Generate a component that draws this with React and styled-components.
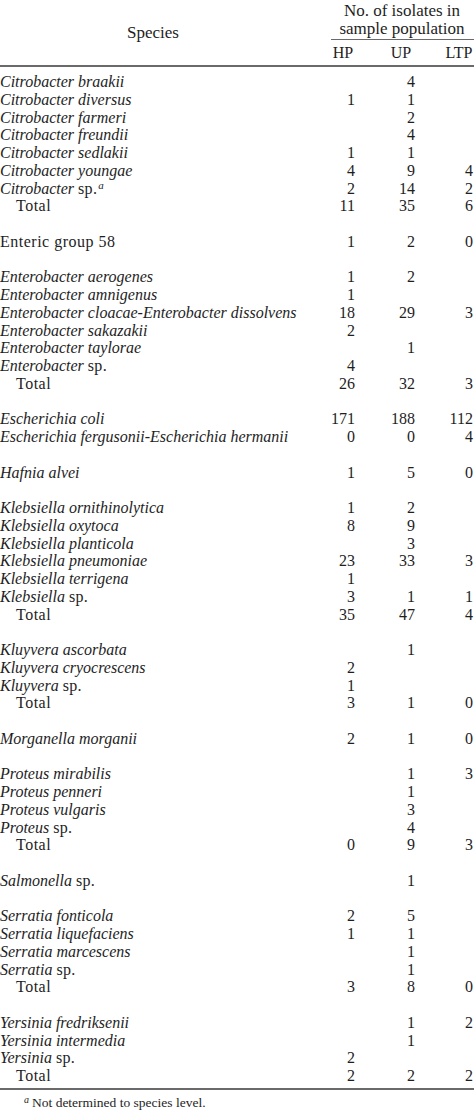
import React from "react";
import styled, { createGlobalStyle } from "styled-components";

const GlobalStyle = createGlobalStyle`
  html, body {
    margin: 0;
    padding: 0;
    background: #ffffff;
    overflow: hidden;
  }
  body {
    font-family: "Liberation Serif", "Times New Roman", serif;
    color: #1e1e1e;
  }
`;

const ROW_H = 17.75;

const Table = styled.div`
  width: 474px;
  font-size: 16px;
`;

const Header = styled.div`
  display: grid;
  grid-template-columns: 312px 1fr;
  grid-template-rows: auto 25px;
  font-size: 17px;
`;

const SpeciesHead = styled.div`
  grid-row: 1 / span 2;
  display: flex;
  align-items: center;
  justify-content: center;
  padding: 1px 6px 0 0;
`;

const GroupHead = styled.div`
  margin-left: 19px;
  padding: 2px 15px 1.5px 0;
  border-bottom: 1px solid #6a6a6a;
  text-align: center;
  line-height: ${ROW_H}px;
`;

const SubHeads = styled.div`
  display: grid;
  grid-template-columns: repeat(3, 58px);
  padding-left: 2px;
  align-items: center;
  font-size: 16px;
`;

const SubHead = styled.div`
  text-align: center;
  padding-top: 1px;
`;

const Rule = styled.div`
  height: 2px;
  background: #6a6a6a;
`;

const Body = styled.div`
  padding-top: 6px;
`;

const Row = styled.div`
  display: grid;
  grid-template-columns: 312px 43px 60px 58px;
  height: ${ROW_H}px;
  line-height: ${ROW_H}px;
`;

const Name = styled.div`
  padding-left: ${(p) => (p.$indent ? "16px" : "0")};
  font-style: ${(p) => (p.$italic ? "italic" : "normal")};
  letter-spacing: ${(p) => (p.$italic ? "0" : "0.5px")};
  white-space: nowrap;
`;

const Roman = styled.span`
  font-style: normal;
  letter-spacing: 0.3px;
`;

const Num = styled.div`
  text-align: right;
  white-space: nowrap;
`;

const Sup = styled.sup`
  font-style: italic;
  font-size: 11px;
  line-height: 0;
  vertical-align: 5px;
  margin-left: 1px;
`;

const BottomRule = styled.div`
  height: 2px;
  background: #6a6a6a;
  margin-top: 3px;
`;

const Footnote = styled.div`
  padding: 2px 0 0 24px;
  font-size: 13.5px;
  line-height: 16px;
`;

const FootSup = styled.span`
  font-style: italic;
  font-size: 10px;
  vertical-align: 4px;
  margin-right: 3px;
`;

const groups = [
  {
    rows: [
      ["Citrobacter braakii", "", "4", ""],
      ["Citrobacter diversus", "1", "1", ""],
      ["Citrobacter farmeri", "", "2", ""],
      ["Citrobacter freundii", "", "4", ""],
      ["Citrobacter sedlakii", "1", "1", ""],
      ["Citrobacter youngae", "4", "9", "4"],
      [{ genus: "Citrobacter", sp: true, sup: "a" }, "2", "14", "2"],
    ],
    total: ["11", "35", "6"],
  },
  { rows: [[{ plain: "Enteric group 58" }, "1", "2", "0"]] },
  {
    rows: [
      ["Enterobacter aerogenes", "1", "2", ""],
      ["Enterobacter amnigenus", "1", "", ""],
      ["Enterobacter cloacae-Enterobacter dissolvens", "18", "29", "3"],
      ["Enterobacter sakazakii", "2", "", ""],
      ["Enterobacter taylorae", "", "1", ""],
      [{ genus: "Enterobacter", sp: true }, "4", "", ""],
    ],
    total: ["26", "32", "3"],
  },
  {
    rows: [
      ["Escherichia coli", "171", "188", "112"],
      ["Escherichia fergusonii-Escherichia hermanii", "0", "0", "4"],
    ],
  },
  { rows: [["Hafnia alvei", "1", "5", "0"]] },
  {
    rows: [
      ["Klebsiella ornithinolytica", "1", "2", ""],
      ["Klebsiella oxytoca", "8", "9", ""],
      ["Klebsiella planticola", "", "3", ""],
      ["Klebsiella pneumoniae", "23", "33", "3"],
      ["Klebsiella terrigena", "1", "", ""],
      [{ genus: "Klebsiella", sp: true }, "3", "1", "1"],
    ],
    total: ["35", "47", "4"],
  },
  {
    rows: [
      ["Kluyvera ascorbata", "", "1", ""],
      ["Kluyvera cryocrescens", "2", "", ""],
      [{ genus: "Kluyvera", sp: true }, "1", "", ""],
    ],
    total: ["3", "1", "0"],
  },
  { rows: [["Morganella morganii", "2", "1", "0"]] },
  {
    rows: [
      ["Proteus mirabilis", "", "1", "3"],
      ["Proteus penneri", "", "1", ""],
      ["Proteus vulgaris", "", "3", ""],
      [{ genus: "Proteus", sp: true }, "", "4", ""],
    ],
    total: ["0", "9", "3"],
  },
  { rows: [[{ genus: "Salmonella", sp: true }, "", "1", ""]] },
  {
    rows: [
      ["Serratia fonticola", "2", "5", ""],
      ["Serratia liquefaciens", "1", "1", ""],
      ["Serratia marcescens", "", "1", ""],
      [{ genus: "Serratia", sp: true }, "", "1", ""],
    ],
    total: ["3", "8", "0"],
  },
  {
    rows: [
      ["Yersinia fredriksenii", "", "1", "2"],
      ["Yersinia intermedia", "", "1", ""],
      [{ genus: "Yersinia", sp: true }, "2", "", ""],
    ],
    total: ["2", "2", "2"],
  },
];

function NameCell({ label }) {
  if (typeof label === "string") {
    return <Name $italic>{label}</Name>;
  }
  if (label.plain) {
    return <Name>{label.plain}</Name>;
  }
  return (
    <Name $italic>
      {label.genus} <Roman>sp.</Roman>
      {label.sup && <Sup>{label.sup}</Sup>}
    </Name>
  );
}

function DataRow({ label, values }) {
  return (
    <Row>
      <NameCell label={label} />
      {values.map((v, i) => (
        <Num key={i}>{v}</Num>
      ))}
    </Row>
  );
}

export default function App() {
  return (
    <>
      <GlobalStyle />
      <Table>
        <Header>
          <SpeciesHead>Species</SpeciesHead>
          <GroupHead>
            No. of isolates in
            <br />
            sample population
          </GroupHead>
          <SubHeads>
            <SubHead>HP</SubHead>
            <SubHead>UP</SubHead>
            <SubHead>LTP</SubHead>
          </SubHeads>
        </Header>
        <Rule />
        <Body>
          {groups.map((g, gi) => (
            <React.Fragment key={gi}>
              {gi > 0 && <Row />}
              {g.rows.map(([label, ...values], ri) => (
                <DataRow key={ri} label={label} values={values} />
              ))}
              {g.total && (
                <Row>
                  <Name $indent>Total</Name>
                  {g.total.map((v, i) => (
                    <Num key={i}>{v}</Num>
                  ))}
                </Row>
              )}
            </React.Fragment>
          ))}
        </Body>
        <BottomRule />
        <Footnote>
          <FootSup>a</FootSup>Not determined to species level.
        </Footnote>
      </Table>
    </>
  );
}
